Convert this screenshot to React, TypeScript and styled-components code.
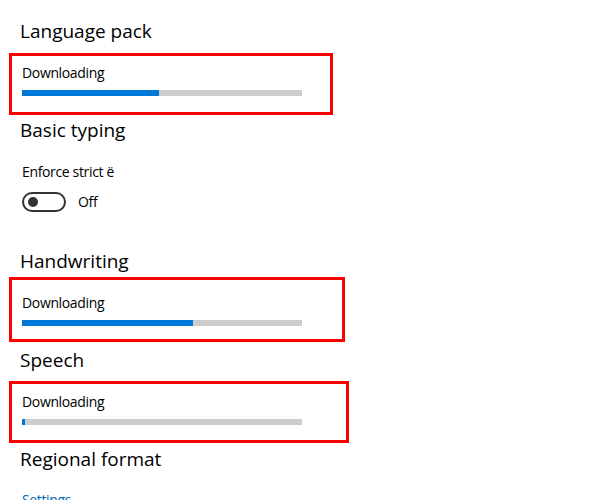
import React from "react";
import styled, { createGlobalStyle } from "styled-components";

const GlobalStyle = createGlobalStyle`
  html, body { margin: 0; padding: 0; background: #ffffff; }
  body { font-family: "Open Sans", "Noto Sans", sans-serif; color: #000; }
  * { box-sizing: border-box; }
`;

const Page = styled.div`
  width: 600px;
  height: 500px;
  overflow: hidden;
  padding: 18px 0 0 20px;
  display: flex;
  flex-direction: column;
`;

const Heading = styled.h2<{ $gapBefore?: number }>`
  margin: ${(p) => p.$gapBefore ?? 0}px 0 0 0;
  font-size: 19px;
  line-height: 26px;
  font-weight: 400;
  letter-spacing: 0;
  color: #000;
`;

const Body = styled.div<{ $gapBefore?: number }>`
  margin: ${(p) => p.$gapBefore ?? 19}px 0 0 2px;
`;

const Label = styled.div`
  font-size: 14px;
  line-height: 20px;
  letter-spacing: -0.35px;
  color: #000;
`;

const ProgressBlock = styled.div`
  position: relative;
  width: 280px;
`;

const Track = styled.div`
  margin-top: 7px;
  width: 280px;
  height: 6px;
  background: #cccccc;
  display: flex;
`;

const Fill = styled.div`
  height: 100%;
  background: #0078d7;
`;

const Outline = styled.div<{ $top: number; $right: number; $bottom: number; $left: number }>`
  position: absolute;
  top: ${(p) => p.$top}px;
  right: ${(p) => p.$right}px;
  bottom: ${(p) => p.$bottom}px;
  left: ${(p) => p.$left}px;
  border: 3px solid #ff0000;
  pointer-events: none;
`;

const ToggleRow = styled.div`
  margin-top: 10px;
  display: flex;
  align-items: center;
  gap: 12px;
`;

const Switch = styled.div`
  width: 44px;
  height: 20px;
  border: 2px solid #333333;
  border-radius: 10px;
  display: flex;
  align-items: center;
  padding-left: 4px;
`;

const Knob = styled.div`
  width: 10px;
  height: 10px;
  border-radius: 50%;
  background: #333333;
`;

const Link = styled.a`
  display: block;
  font-size: 14px;
  line-height: 20px;
  color: #0067b8;
  text-decoration: none;
  letter-spacing: -0.35px;
`;

type Box = { top: number; right: number; bottom: number; left: number };

const Download: React.FC<{ pct: number; box: Box; gap?: number }> = ({ pct, box, gap }) => (
  <Body $gapBefore={gap}>
    <ProgressBlock>
      <Label>Downloading</Label>
      <Track>
        <Fill style={{ width: `${pct}%` }} />
      </Track>
      <Outline $top={box.top} $right={box.right} $bottom={box.bottom} $left={box.left} />
    </ProgressBlock>
  </Body>
);

export default function App() {
  return (
    <>
      <GlobalStyle />
      <Page>
        <Heading>Language pack</Heading>
        <Download pct={49} box={{ top: -10, right: -31, bottom: -19, left: -13 }} />

        <Heading $gapBefore={21}>Basic typing</Heading>
        <Body>
          <Label>Enforce strict ë</Label>
          <ToggleRow>
            <Switch>
              <Knob />
            </Switch>
            <Label>Off</Label>
          </ToggleRow>
        </Body>

        <Heading $gapBefore={36}>Handwriting</Heading>
        <Download pct={61} gap={19} box={{ top: -16, right: -43, bottom: -16, left: -13 }} />

        <Heading $gapBefore={20.5}>Speech</Heading>
        <Download pct={1.1} gap={19.5} box={{ top: -11, right: -47, bottom: -18, left: -13 }} />

        <Heading $gapBefore={21}>Regional format</Heading>
        <Body $gapBefore={18}>
          <Link href="#">Settings</Link>
        </Body>
      </Page>
    </>
  );
}
